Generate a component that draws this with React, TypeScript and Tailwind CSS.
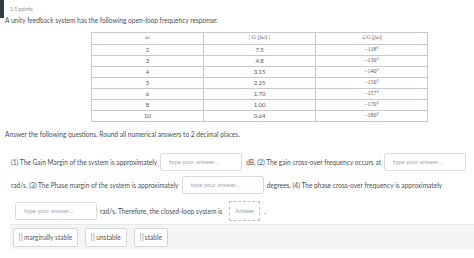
import React from 'react';

const rows = [
  { w: '2', mag: '7.5', phase: '118' },
  { w: '3', mag: '4.8', phase: '130' },
  { w: '4', mag: '3.15', phase: '140' },
  { w: '5', mag: '2.25', phase: '150' },
  { w: '6', mag: '1.70', phase: '157' },
  { w: '8', mag: '1.00', phase: '170' },
  { w: '10', mag: '0.64', phase: '180' },
];

const math = { fontFamily: '"Liberation Serif", "DejaVu Serif", serif' };

// answer blank with a placeholder
const Blank: React.FC<{ className?: string }> = ({ className = '' }) => (
  <div
    className={`flex items-center shrink-0 w-[82px] h-[18px] bg-white border border-[#d9dcde] rounded-[2px] pl-[8px] text-[6px] text-[#a5a9ad] ${className}`}
  >
    type your answer...
  </div>
);

const Grip: React.FC = () => (
  <svg width="4" height="9" viewBox="0 0 4 9" className="mr-[1px] shrink-0">
    {[0, 2, 4, 6].map((y) => (
      <g key={y} fill="#9aa0a6">
        <rect x="0" y={y + 0.5} width="1.2" height="1.2" />
        <rect x="2.4" y={y + 0.5} width="1.2" height="1.2" />
      </g>
    ))}
  </svg>
);

const Chip: React.FC<{ label: string }> = ({ label }) => (
  <div className="flex items-center h-[19px] px-[5px] bg-white border border-[#d3d6d9] rounded-[2px] text-[6.6px] text-[#50565c]">
    <Grip />
    {label}
  </div>
);

export default function App() {
  return (
    <div
      className="w-[474px] h-[258px] overflow-hidden bg-white text-[#4a5056] text-[6.6px] leading-none"
      style={{ fontFamily: 'Lato, "Open Sans", sans-serif' }}
    >
      {/* header */}
      <div className="flex items-start">
        <div className="w-[4px] h-[18px] bg-[#2f3c46]" />
        <span className="ml-[6px] mt-[7px] text-[5.2px] text-[#8b9196]">1.5 points</span>
      </div>
      <p className="pl-[5px] -mt-[1px]">A unity feedback system has the following open-loop frequency response:</p>

      {/* frequency response table */}
      <table className="ml-[91px] mt-[8px] w-[337px] border-collapse border border-[#c6cace] text-[5.9px] text-[#555b61] table-fixed">
        <thead>
          <tr className="h-[12px]">
            <th className="font-normal border border-[#c6cace] italic" style={math}>ω</th>
            <th className="font-normal border border-[#c6cace]" style={math}>
              | <i>G</i> (<i>jω</i>) |
            </th>
            <th className="font-normal border border-[#c6cace]" style={math}>
              ∠<i>G</i> (<i>jω</i>)
            </th>
          </tr>
        </thead>
        <tbody>
          {rows.map((r) => (
            <tr key={r.w} className="h-[11px]">
              <td className="text-center border border-[#c6cace]">{r.w}</td>
              <td className="text-center border border-[#c6cace]">{r.mag}</td>
              <td className="text-center border border-[#c6cace]" style={math}>
                −{r.phase}°
              </td>
            </tr>
          ))}
        </tbody>
      </table>

      <p className="pl-[5px] mt-[9px]">Answer the following questions. Round all numerical answers to 2 decimal places.</p>

      {/* fill-in-the-blank paragraph */}
      <div className="pl-[11px] mt-[16px]">
        <div className="flex items-center h-[18px] whitespace-nowrap">
          <span>(1) The Gain Margin of the system is approximately</span>
          <Blank className="ml-[3px] mr-[4px]" />
          <span>dB, (2) The gain cross-over frequency occurs at</span>
          <Blank className="ml-[3px]" />
        </div>
        <div className="flex items-center h-[18px] mt-[5px] whitespace-nowrap">
          <span>rad/s. (3) The Phase margin of the system is approximately</span>
          <Blank className="ml-[3px] mr-[3px]" />
          <span>degrees. (4) The phase cross-over frequency is approximately</span>
        </div>
        <div className="flex items-center h-[20px] mt-[7px] whitespace-nowrap">
          <Blank className="ml-[4px] mr-[3px]" />
          <span>rad/s. Therefore, the closed-loop system is</span>
          <div className="ml-[7px] flex items-center justify-center w-[31px] h-[20px] border border-dashed border-[#bfc3c7] text-[5.8px] text-[#9a9fa4]">
            Answer
          </div>
          <span className="ml-[4px]">.</span>
        </div>
      </div>

      {/* answer choices */}
      <div className="ml-[10px] mt-[3px] border-t border-[#e6e8ea] bg-[#f4f5f5] h-[25px] flex items-center gap-[7px] pl-[3px]">
        <Chip label="marginally stable" />
        <Chip label="unstable" />
        <Chip label="stable" />
      </div>
    </div>
  );
}
